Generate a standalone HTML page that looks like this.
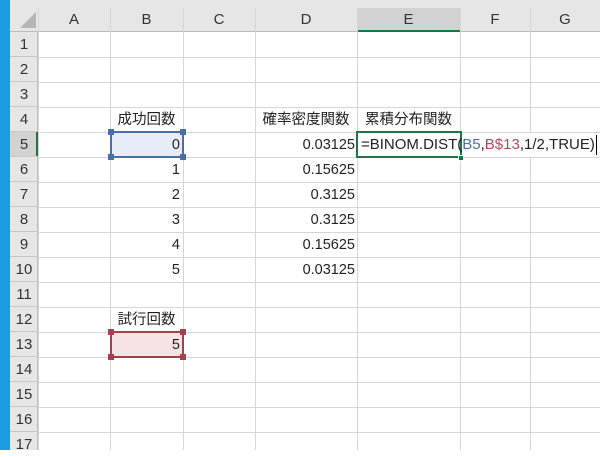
<!DOCTYPE html>
<html><head><meta charset="utf-8"><style>
*{margin:0;padding:0;box-sizing:border-box}
body{width:600px;height:450px;overflow:hidden;background:#fff;position:relative;font-family:"Liberation Sans","Noto Sans CJK JP",sans-serif;color:#222}
div{position:absolute}
.vl{top:8px;width:1px;height:442px;background:#d6d6d6}
.hl{left:38px;width:562px;height:1px;background:#d6d6d6}
.rh{left:10px;width:28px;height:25px;line-height:25px;text-align:center;font-size:15px;color:#333}
.ch{top:8px;height:24px;line-height:24px;text-align:center;font-size:15px;color:#333}
.t{font-size:14.5px;height:25px;line-height:26px;white-space:nowrap}
.r{text-align:right}
.c{text-align:center}
.h{width:6px;height:6px}
</style></head><body>
<div style="left:0;top:0;width:10px;height:450px;background:#1e9be0"></div>
<div style="left:10px;top:0;width:590px;height:32px;background:#e6e6e6"></div>
<div style="left:10px;top:32px;width:28px;height:418px;background:#e6e6e6;border-right:1px solid #bcbcbc"></div>
<div style="left:10px;top:31px;width:590px;height:1px;background:#bcbcbc"></div>
<div style="left:20px;top:12px;width:0;height:0;border-left:16px solid transparent;border-bottom:16px solid #b5b5b5"></div>
<div style="left:357px;top:8px;width:103px;height:24px;background:#d2d2d2;border-bottom:2px solid #217346"></div>
<div style="left:10px;top:132px;width:28px;height:25px;background:#d2d2d2;border-right:2px solid #217346"></div>
<div class="vl" style="left:38px"></div><div class="vl" style="left:110px"></div><div class="vl" style="left:183px"></div><div class="vl" style="left:255px"></div><div class="vl" style="left:357px"></div><div class="vl" style="left:460px"></div><div class="vl" style="left:530px"></div>
<div class="hl" style="top:57px"></div><div class="hl" style="top:82px"></div><div class="hl" style="top:107px"></div><div class="hl" style="top:132px"></div><div class="hl" style="top:157px"></div><div class="hl" style="top:182px"></div><div class="hl" style="top:207px"></div><div class="hl" style="top:232px"></div><div class="hl" style="top:257px"></div><div class="hl" style="top:282px"></div><div class="hl" style="top:307px"></div><div class="hl" style="top:332px"></div><div class="hl" style="top:357px"></div><div class="hl" style="top:382px"></div><div class="hl" style="top:407px"></div><div class="hl" style="top:432px"></div>
<div style="left:10px;top:32px;width:28px;height:418px;background:repeating-linear-gradient(to bottom,transparent 0,transparent 24px,#c8c8c8 24px,#c8c8c8 25px)"></div>
<div class="ch" style="left:38px;width:72px">A</div><div class="ch" style="left:110px;width:73px">B</div><div class="ch" style="left:183px;width:72px">C</div><div class="ch" style="left:255px;width:102px">D</div><div class="ch" style="left:357px;width:103px">E</div><div class="ch" style="left:460px;width:70px">F</div><div class="ch" style="left:530px;width:70px">G</div>
<div class="rh" style="top:32px">1</div><div class="rh" style="top:57px">2</div><div class="rh" style="top:82px">3</div><div class="rh" style="top:107px">4</div><div class="rh" style="top:132px">5</div><div class="rh" style="top:157px">6</div><div class="rh" style="top:182px">7</div><div class="rh" style="top:207px">8</div><div class="rh" style="top:232px">9</div><div class="rh" style="top:257px">10</div><div class="rh" style="top:282px">11</div><div class="rh" style="top:307px">12</div><div class="rh" style="top:332px">13</div><div class="rh" style="top:357px">14</div><div class="rh" style="top:382px">15</div><div class="rh" style="top:407px">16</div><div class="rh" style="top:432px">17</div>
<div style="left:110px;top:131px;width:74px;height:27px;background:#e6edf8;border:2px solid #4a6fa5"></div>
<div class="h" style="left:108px;top:129px;background:#4a6fa5"></div><div class="h" style="left:180px;top:129px;background:#4a6fa5"></div><div class="h" style="left:108px;top:154px;background:#4a6fa5"></div><div class="h" style="left:180px;top:154px;background:#4a6fa5"></div>
<div style="left:110px;top:331px;width:74px;height:27px;background:#f6e4e5;border:2px solid #a0434f"></div>
<div class="h" style="left:108px;top:329px;background:#a0434f"></div><div class="h" style="left:180px;top:329px;background:#a0434f"></div><div class="h" style="left:108px;top:354px;background:#a0434f"></div><div class="h" style="left:180px;top:354px;background:#a0434f"></div>
<div style="left:460px;top:133px;width:140px;height:24px;background:#fff"></div>
<div style="left:356px;top:131px;width:106px;height:27px;border:2px solid #217346;background:#fff"></div>
<div style="left:458px;top:155px;width:6px;height:6px;background:#217346;border:1px solid #fff"></div>
<div class="t c" style="left:110px;top:107px;width:73px">成功回数</div>
<div class="t c" style="left:255px;top:107px;width:102px">確率密度関数</div>
<div class="t c" style="left:357px;top:107px;width:103px">累積分布関数</div>
<div class="t c" style="left:110px;top:307px;width:73px">試行回数</div>
<div class="t r" style="left:110px;top:132px;width:70px">0</div>
<div class="t r" style="left:110px;top:157px;width:70px">1</div>
<div class="t r" style="left:110px;top:182px;width:70px">2</div>
<div class="t r" style="left:110px;top:207px;width:70px">3</div>
<div class="t r" style="left:110px;top:232px;width:70px">4</div>
<div class="t r" style="left:110px;top:257px;width:70px">5</div>
<div class="t r" style="left:110px;top:332px;width:70px">5</div>
<div class="t r" style="left:255px;top:132px;width:100px">0.03125</div>
<div class="t r" style="left:255px;top:157px;width:100px">0.15625</div>
<div class="t r" style="left:255px;top:182px;width:100px">0.3125</div>
<div class="t r" style="left:255px;top:207px;width:100px">0.3125</div>
<div class="t r" style="left:255px;top:232px;width:100px">0.15625</div>
<div class="t r" style="left:255px;top:257px;width:100px">0.03125</div>
<div class="t" style="left:361px;top:132px;font-size:15px">=BINOM.DIST(<span style="color:#4a6fa5">B5</span>,<span style="color:#b04a56">B$13</span>,1/2,TRUE)</div>
<div style="left:596px;top:135px;width:1px;height:20px;background:#000"></div>
</body></html>
